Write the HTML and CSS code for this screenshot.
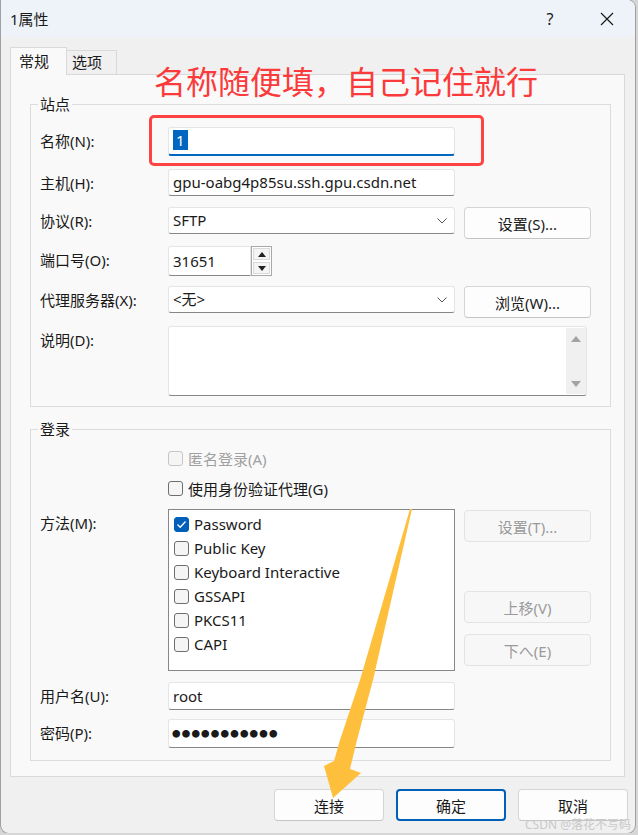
FILE: index.html
```html
<!DOCTYPE html>
<html lang="zh-CN">
<head>
    <meta charset="UTF-8">
    <title>1属性</title>
    <link rel="stylesheet" href="styles.css">
</head>
<body>
<div class="window">
    <div class="titlebar">
        <span class="title">1属性</span>
        <span class="help">?</span>
        <svg class="close" width="14" height="14" viewBox="0 0 14 14">
            <path d="M1 1 L13 13 M13 1 L1 13" stroke="#1a1a1a" stroke-width="1.2" fill="none"/>
        </svg>
    </div>

    <div class="tabs">
        <div class="tab active">常规</div>
        <div class="tab">选项</div>
    </div>

    <div class="panel">
        <!-- 站点 -->
        <div class="group group-site">
            <div class="group-title">站点</div>
            <div class="rows">
                <div class="row row-name">
                    <span class="label">名称(N):</span>
                    <div class="field field-focus"><span class="selected-text">1</span></div>
                </div>
                <div class="row row-host">
                    <span class="label">主机(H):</span>
                    <div class="field">gpu-oabg4p85su.ssh.gpu.csdn.net</div>
                </div>
                <div class="row row-proto">
                    <span class="label">协议(R):</span>
                    <div class="field select">SFTP
                        <svg class="chevron" width="10" height="6" viewBox="0 0 10 6"><path d="M0.5 0.5 L5 5 L9.5 0.5" stroke="#555" fill="none"/></svg>
                    </div>
                    <button class="btn">设置(S)...</button>
                </div>
                <div class="row row-port">
                    <span class="label">端口号(O):</span>
                    <div class="field port">31651</div>
                    <div class="spin">
                        <div class="spin-btn"><svg width="8" height="5" viewBox="0 0 8 5"><path d="M0 5 L4 0 L8 5 Z" fill="#222"/></svg></div>
                        <div class="spin-btn"><svg width="8" height="5" viewBox="0 0 8 5"><path d="M0 0 L8 0 L4 5 Z" fill="#222"/></svg></div>
                    </div>
                </div>
                <div class="row row-proxy">
                    <span class="label">代理服务器(X):</span>
                    <div class="field select">&lt;无&gt;
                        <svg class="chevron" width="10" height="6" viewBox="0 0 10 6"><path d="M0.5 0.5 L5 5 L9.5 0.5" stroke="#555" fill="none"/></svg>
                    </div>
                    <button class="btn">浏览(W)...</button>
                </div>
                <div class="row row-desc">
                    <span class="label">说明(D):</span>
                    <div class="field memo">
                        <div class="scrollbar">
                            <svg width="10" height="6" viewBox="0 0 10 6"><path d="M0 6 L5 0 L10 6 Z" fill="#a3a3a3"/></svg>
                            <svg width="10" height="6" viewBox="0 0 10 6"><path d="M0 0 L10 0 L5 6 Z" fill="#a3a3a3"/></svg>
                        </div>
                    </div>
                </div>
            </div>
        </div>

        <!-- 登录 -->
        <div class="group group-login">
            <div class="group-title">登录</div>
            <div class="check-row disabled"><span class="check"></span>匿名登录(A)</div>
            <div class="check-row"><span class="check"></span>使用身份验证代理(G)</div>

            <div class="row row-method">
                <span class="label">方法(M):</span>
                <div class="listbox">
                    <div class="list-item"><span class="check checked"><svg width="11" height="9" viewBox="0 0 11 9"><path d="M1.5 4.5 L4.2 7.2 L9.5 1.5" stroke="#fff" stroke-width="1.3" fill="none"/></svg></span>Password</div>
                    <div class="list-item"><span class="check"></span>Public Key</div>
                    <div class="list-item"><span class="check"></span>Keyboard Interactive</div>
                    <div class="list-item"><span class="check"></span>GSSAPI</div>
                    <div class="list-item"><span class="check"></span>PKCS11</div>
                    <div class="list-item"><span class="check"></span>CAPI</div>
                </div>
                <div class="side-buttons">
                    <button class="btn disabled">设置(T)...</button>
                    <button class="btn disabled up">上移(V)</button>
                    <button class="btn disabled">下へ(E)</button>
                </div>
            </div>

            <div class="row row-user">
                <span class="label">用户名(U):</span>
                <div class="field">root</div>
            </div>
            <div class="row row-pass">
                <span class="label">密码(P):</span>
                <div class="field dots">●●●●●●●●●●●</div>
            </div>
        </div>
    </div>

    <div class="actions">
        <button class="btn action">连接</button>
        <button class="btn action default">确定</button>
        <button class="btn action">取消</button>
    </div>

    <!-- annotations drawn over the dialog -->
    <div class="note-text">名称随便填，自己记住就行</div>
    <div class="note-box"></div>
    <svg class="note-arrow" width="638" height="835" viewBox="0 0 638 835">
        <polygon points="412,509 373,680 357,740 350,769 361,773 333,798 324,766 334,761 340,740 360,680 410,509" fill="#fec03c"/>
    </svg>
    <div class="watermark">CSDN @落花不写码</div>
</div>
</body>
</html>
```

FILE: styles.css
```css
body {
    margin: 0;
    background: #d6d6d6;
    font-family: "Noto Sans", "Noto Sans CJK SC", sans-serif;
    font-size: 15px;
    color: #1a1a1a;
}

.window {
    position: relative;
    width: 634px;
    height: 833px;
    margin-left: 1px;
    background: #f0f0f0;
    border-radius: 0 8px 8px 8px;
    box-shadow: 0 0 0 1px rgba(0, 0, 0, 0.25);
    overflow: hidden;
}

.titlebar {
    display: flex;
    align-items: center;
    height: 37px;
    padding-left: 9px;
    padding-right: 21px;
    background: #eef3f9;
}
.titlebar .title {
    flex: 1;
}
.titlebar .help {
    width: 20px;
    text-align: center;
    margin-right: 40px;
    font-size: 16px;
}

/* tabs */
.tabs {
    display: flex;
    align-items: flex-end;
    margin: 10px 0 0 9px;
    height: 27px;
}
.tab {
    position: relative;
    height: 24px;
    line-height: 23px;
    width: 50px;
    box-sizing: border-box;
    padding-left: 5px;
    border: 1px solid #d9d9d9;
    border-bottom: none;
    border-left: none;
    background: #f0f0f0;
}
.tab.active {
    width: 57px;
    height: 28px;
    line-height: 26px;
    padding-left: 8px;
    margin-bottom: -1px;
    border-left: 1px solid #d9d9d9;
    background: #f9f9f9;
    z-index: 1;
}

.panel {
    margin: 0 10px 0 9px;
    padding: 19px 13px 15px 19px;
    background: #f9f9f9;
    border: 1px solid #d9d9d9;
}

/* group boxes */
.group {
    border: 1px solid #dcdcdc;
    padding: 0 19px 0 9px;
}
.group-site {
    margin-top: 10px;
    padding-bottom: 10px;
}
.group-login {
    margin-top: 22px;
    padding-bottom: 12px;
}
.group-title {
    display: table;
    margin: -11px 0 0 -2px;
    padding: 0 2px;
    line-height: 20px;
    background: #f9f9f9;
}
.rows {
    margin-top: 13px;
}

.row {
    display: flex;
    align-items: flex-start;
}
.row-name { height: 42px; }
.row-host { height: 38px; }
.row-proto { height: 39px; }
.row-port { height: 40px; }
.row-proxy { height: 40px; }
.row-desc { height: 70px; }

.label {
    width: 128px;
    flex-shrink: 0;
    line-height: 28px;
}

.field {
    position: relative;
    width: 287px;
    height: 27px;
    box-sizing: border-box;
    padding-left: 4px;
    line-height: 25px;
    background: #fff;
    border: 1px solid #e5e5e5;
    border-bottom-color: #868686;
    border-radius: 3px;
}
.field-focus {
    height: 29px;
    border-bottom: 2px solid #0067c0;
}
.selected-text {
    display: inline-block;
    padding: 0 3px;
    line-height: 20px;
    background: #0067c0;
    color: #fff;
}
.select .chevron {
    position: absolute;
    right: 7px;
    top: 10px;
}
.port {
    width: 83px;
    height: 30px;
    line-height: 28px;
    border-radius: 3px 0 0 3px;
}
.spin {
    display: flex;
    flex-direction: column;
    width: 21px;
    height: 30px;
    box-sizing: border-box;
    border: 1px solid #a8a8a8;
    background: #fff;
}
.spin-btn {
    flex: 1;
    display: flex;
    align-items: center;
    justify-content: center;
    margin: 1px;
    background: #f4f4f4;
    border: 1px solid #dadada;
}
.memo {
    width: 419px;
    height: 70px;
}
.scrollbar {
    position: absolute;
    right: 0;
    top: 1px;
    bottom: 1px;
    width: 20px;
    display: flex;
    flex-direction: column;
    justify-content: space-between;
    align-items: center;
    padding: 8px 0 7px;
    box-sizing: border-box;
    background: #f0f0f0;
}

/* buttons */
.btn {
    font-family: inherit;
    font-size: 15px;
    color: #1a1a1a;
    width: 127px;
    height: 32px;
    margin-left: 9px;
    background: #fdfdfd;
    border: 1px solid #d5d5d5;
    border-bottom-color: #c4c4c4;
    border-radius: 4px;
}
.btn.disabled {
    color: #9a9a9a;
    background: #f7f7f7;
    border-color: #e3e3e3;
}

/* checkboxes */
.check {
    display: inline-flex;
    align-items: center;
    justify-content: center;
    width: 15px;
    height: 15px;
    box-sizing: border-box;
    margin-right: 5px;
    border: 1px solid #6e6e6e;
    border-radius: 3px;
    background: #f5f5f5;
}
.check.checked {
    background: #005fb8;
    border-color: #005fb8;
}
.check-row {
    display: flex;
    align-items: center;
    height: 30px;
    margin-left: 128px;
}
.check-row.disabled {
    margin-top: 4px;
    color: #a0a0a0;
}
.check-row.disabled .check {
    border-color: #c6c6c6;
}

.row-method {
    margin-top: 6px;
    height: 173px;
}
.listbox {
    width: 287px;
    height: 162px;
    box-sizing: border-box;
    padding: 2px 0 0 5px;
    background: #fff;
    border: 1px solid #878787;
}
.list-item {
    display: flex;
    align-items: center;
    height: 24px;
}
.side-buttons {
    display: flex;
    flex-direction: column;
    padding-top: 1px;
}
.side-buttons .btn {
    margin-bottom: 11px;
}
.side-buttons .btn.up {
    margin-top: 38px;
}

.row-user { height: 37px; }
.row-user .field { height: 28px; line-height: 26px; }
.row-pass { height: 29px; }
.row-pass .field { height: 29px; line-height: 27px; }
.dots {
    font-size: 8.5px;
    letter-spacing: 1.2px;
    padding-left: 3px;
}

/* bottom buttons */
.actions {
    display: flex;
    justify-content: flex-end;
    gap: 12px;
    margin-top: 12px;
    padding-right: 7px;
}
.btn.action {
    width: 110px;
    margin-left: 0;
}
.btn.default {
    border: 2px solid #005fb8;
}

/* annotations */
.note-text {
    position: absolute;
    left: 153px;
    top: 58px;
    font-family: "Noto Sans CJK SC", sans-serif;
    font-size: 32px;
    line-height: 44px;
    color: #fb3b3b;
}
.note-box {
    position: absolute;
    left: 148px;
    top: 115px;
    width: 335px;
    height: 51px;
    box-sizing: border-box;
    border: 3px solid #ff4242;
    border-radius: 5px;
}
.note-arrow {
    position: absolute;
    left: -1px;
    top: 0;
}
.watermark {
    position: absolute;
    right: 4px;
    bottom: 1px;
    font-size: 12px;
    line-height: 14px;
    color: #c9c9c9;
}
```
